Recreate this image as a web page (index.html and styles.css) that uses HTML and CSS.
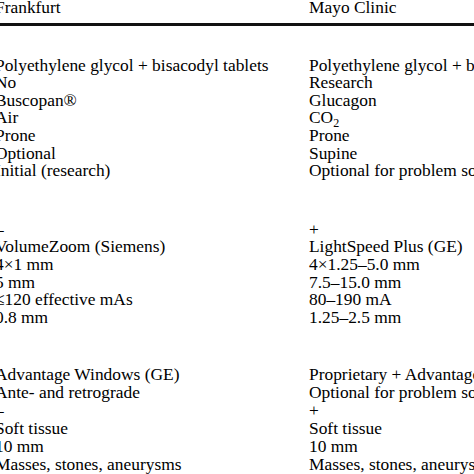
FILE: index.html
```html
<!DOCTYPE html>
<html>
<head>
<meta charset="utf-8">
<link rel="stylesheet" href="styles.css">
</head>
<body>
<div class="page">
  <div class="row head">
    <div class="cell">Frankfurt</div>
    <div class="cell">Mayo Clinic</div>
  </div>
  <div class="rule"></div>

  <div class="group g1">
    <div class="row"><div class="cell">Polyethylene glycol + bisacodyl tablets</div><div class="cell">Polyethylene glycol + bisacodyl tablets</div></div>
    <div class="row"><div class="cell">No</div><div class="cell">Research</div></div>
    <div class="row"><div class="cell">Buscopan®</div><div class="cell">Glucagon</div></div>
    <div class="row"><div class="cell">Air</div><div class="cell">CO<sub class="sub">2</sub></div></div>
    <div class="row"><div class="cell">Prone</div><div class="cell">Prone</div></div>
    <div class="row"><div class="cell">Optional</div><div class="cell">Supine</div></div>
    <div class="row"><div class="cell">Initial (research)</div><div class="cell">Optional for problem solving</div></div>
  </div>

  <div class="group g2">
    <div class="row"><div class="cell">–</div><div class="cell">+</div></div>
    <div class="row"><div class="cell">VolumeZoom (Siemens)</div><div class="cell">LightSpeed Plus (GE)</div></div>
    <div class="row"><div class="cell">4×1 mm</div><div class="cell">4×1.25–5.0 mm</div></div>
    <div class="row"><div class="cell">5 mm</div><div class="cell">7.5–15.0 mm</div></div>
    <div class="row"><div class="cell">≤120 effective mAs</div><div class="cell">80–190 mA</div></div>
    <div class="row"><div class="cell">0.8 mm</div><div class="cell">1.25–2.5 mm</div></div>
  </div>

  <div class="group g3">
    <div class="row"><div class="cell">Advantage Windows (GE)</div><div class="cell">Proprietary + Advantage Windows (GE)</div></div>
    <div class="row"><div class="cell">Ante- and retrograde</div><div class="cell">Optional for problem solving</div></div>
    <div class="row"><div class="cell">–</div><div class="cell">+</div></div>
    <div class="row"><div class="cell">Soft tissue</div><div class="cell">Soft tissue</div></div>
    <div class="row"><div class="cell">10 mm</div><div class="cell">10 mm</div></div>
    <div class="row"><div class="cell">Masses, stones, aneurysms</div><div class="cell">Masses, stones, aneurysms</div></div>
  </div>
</div>
</body>
</html>
```
FILE: styles.css
```css
html, body {
  margin: 0;
  padding: 0;
  background: #ffffff;
  overflow: hidden;
}
.page {
  width: 479px;
  margin-left: -5px;
  margin-top: -1px;
  font-family: "Liberation Serif", "Times New Roman", serif;
  font-size: 17.4px;
  line-height: 17.6px;
  color: #000;
}
.row {
  display: grid;
  grid-template-columns: 314px auto;
  white-space: nowrap;
}
.cell {
  white-space: nowrap;
}
.head {
  height: 24px;
}
.rule {
  height: 3px;
  background: #111111;
}
.g1 { margin-top: 30.6px; }
.g2 { margin-top: 41px; }
.g3 { margin-top: 40px; line-height: 17.9px; }
.sub {
  font-size: 12px;
  line-height: 0;
  vertical-align: -4px;
}
```
